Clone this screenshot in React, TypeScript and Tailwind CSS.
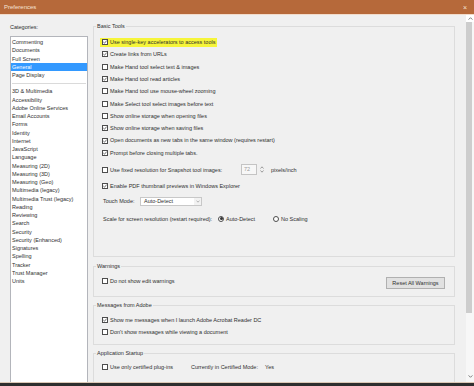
import React from 'react';

const categoriesTop = ['Commenting', 'Documents', 'Full Screen', 'General', 'Page Display'];
const categoriesRest = [
  '3D & Multimedia',
  'Accessibility',
  'Adobe Online Services',
  'Email Accounts',
  'Forms',
  'Identity',
  'Internet',
  'JavaScript',
  'Language',
  'Measuring (2D)',
  'Measuring (3D)',
  'Measuring (Geo)',
  'Multimedia (legacy)',
  'Multimedia Trust (legacy)',
  'Reading',
  'Reviewing',
  'Search',
  'Security',
  'Security (Enhanced)',
  'Signatures',
  'Spelling',
  'Tracker',
  'Trust Manager',
  'Units',
];

const basicTools: { label: string; checked: boolean; highlight?: boolean }[] = [
  { label: 'Use single-key accelerators to access tools', checked: true, highlight: true },
  { label: 'Create links from URLs', checked: true },
  { label: 'Make Hand tool select text & images', checked: false },
  { label: 'Make Hand tool read articles', checked: true },
  { label: 'Make Hand tool use mouse-wheel zooming', checked: false },
  { label: 'Make Select tool select images before text', checked: false },
  { label: 'Show online storage when opening files', checked: false },
  { label: 'Show online storage when saving files', checked: true },
  { label: 'Open documents as new tabs in the same window (requires restart)', checked: true },
  { label: 'Prompt before closing multiple tabs.', checked: true },
];

export default function App() {
  return (
    <div className="w-[474px] h-[386px] flex flex-col bg-[#f0f0f0] text-[#2f2f2f] text-[5.5px] font-['Liberation_Sans',Arial,sans-serif] overflow-hidden">
      {/* title bar */}
      <div className="h-[14px] shrink-0 bg-[#b6693a] flex items-center justify-between pl-[4px] pr-[7px] text-[6px] text-[#f6e3d4]">
        <span>Preferences</span>
        <span className="text-[7px] leading-none">×</span>
      </div>
      <div className="h-[1px] shrink-0 bg-[#f2dccb]" />

      <div className="h-[367px] shrink-0 flex overflow-hidden">
        {/* left: categories */}
        <div className="w-[88px] shrink-0 pl-[10px] pt-[8px] flex flex-col">
          <div className="leading-[8px] h-[8px]">Categories:</div>
          <div className="mt-[5px] w-[78px] h-[360px] shrink-0 border border-[#b3b5bb] bg-white pt-[1px] flex flex-col">
            {categoriesTop.map((c) => (
              <CategoryItem key={c} label={c} selected={c === 'General'} />
            ))}
            <div className="h-[8px] flex items-center px-[1px]">
              <div className="h-[1px] w-full bg-[#dadada]" />
            </div>
            {categoriesRest.map((c) => (
              <CategoryItem key={c} label={c} />
            ))}
          </div>
        </div>

        {/* right: settings */}
        <div className="w-[362px] shrink-0 ml-[5px] pt-[7px] flex flex-col">
          <Group title="Basic Tools" className="h-[235px]">
            <div className="pt-[6px] flex flex-col">
              {basicTools.map((t) => (
                <div key={t.label} className="h-[12.3px] flex items-center pl-[8px]">
                  {t.highlight ? (
                    <span className="flex items-center gap-[2px] bg-[#f6f53a] -ml-[2px] pl-[2px] pr-[2px] h-[9px]">
                      <Check checked={t.checked} />
                      <span>{t.label}</span>
                    </span>
                  ) : (
                    <span className="flex items-center gap-[2px]">
                      <Check checked={t.checked} />
                      <span>{t.label}</span>
                    </span>
                  )}
                </div>
              ))}

              <div className="mt-[3px] h-[16px] flex items-center pl-[8px]">
                <span className="w-[139px] flex items-center gap-[2px]">
                  <Check checked={false} />
                  <span>Use fixed resolution for Snapshot tool images:</span>
                </span>
                <span className="w-[16px] h-[11px] border border-[#c4c4c4] bg-[#f7f7f7] text-[#9a9a9a] pl-[2px] leading-[9px]">72</span>
                <span className="ml-[3px] flex flex-col items-center gap-[1px]">
                  <svg width="4" height="3" viewBox="0 0 4 3">
                    <path d="M0.5 2.5 L2 0.8 L3.5 2.5" stroke="#777" strokeWidth="0.7" fill="none" />
                  </svg>
                  <svg width="4" height="3" viewBox="0 0 4 3">
                    <path d="M0.5 0.5 L2 2.2 L3.5 0.5" stroke="#777" strokeWidth="0.7" fill="none" />
                  </svg>
                </span>
                <span className="ml-[7px]">pixels/inch</span>
              </div>

              <div className="h-[16px] flex items-center pl-[8px]">
                <span className="flex items-center gap-[2px]">
                  <Check checked />
                  <span>Enable PDF thumbnail previews in Windows Explorer</span>
                </span>
              </div>

              <div className="h-[15px] flex items-center pl-[9px]">
                <span className="w-[37px]">Touch Mode:</span>
                <span className="w-[62px] h-[9px] border border-[#c8c8c8] bg-white flex items-center">
                  <span className="flex-1 pl-[3px]">Auto-Detect</span>
                  <span className="w-[7px] h-full bg-[#f2f2f2] flex items-center justify-center">
                    <svg width="4" height="3" viewBox="0 0 4 3">
                      <path d="M0.5 0.6 L2 2.2 L3.5 0.6" stroke="#8a8a8a" strokeWidth="0.6" fill="none" />
                    </svg>
                  </span>
                </span>
              </div>

              <div className="mt-[2px] h-[16px] flex items-center pl-[9px]">
                <span className="w-[115px]">Scale for screen resolution (restart required):</span>
                <span className="w-[55px] flex items-center gap-[2px]">
                  <Radio selected />
                  <span>Auto-Detect</span>
                </span>
                <span className="flex items-center gap-[2px]">
                  <Radio selected={false} />
                  <span>No Scaling</span>
                </span>
              </div>
            </div>
          </Group>

          <Group title="Warnings" className="mt-[5px] h-[35px]">
            <div className="pt-[5px] pl-[8px] pr-[9px] flex items-start justify-between">
              <span className="h-[12px] flex items-center gap-[2px]">
                <Check checked={false} />
                <span>Do not show edit warnings</span>
              </span>
              <button className="mt-[2px] w-[59px] h-[12px] border border-[#b0b0b0] bg-[#e1e1e1] text-[5.5px] text-[#2f2f2f] flex items-center justify-center">
                Reset All Warnings
              </button>
            </div>
          </Group>

          <Group title="Messages from Adobe" className="mt-[4px] h-[44px]">
            <div className="pt-[5px] pl-[8px] flex flex-col">
              <span className="h-[12px] flex items-center gap-[2px]">
                <Check checked />
                <span>Show me messages when I launch Adobe Acrobat Reader DC</span>
              </span>
              <span className="h-[12px] flex items-center gap-[2px]">
                <Check checked={false} />
                <span>Don't show messages while viewing a document</span>
              </span>
            </div>
          </Group>

          <Group title="Application Startup" className="mt-[4px] h-[40px] shrink-0">
            <div className="pt-[4px] pl-[8px] h-[16px] flex items-center">
              <span className="w-[89px] flex items-center gap-[2px]">
                <Check checked={false} />
                <span>Use only certified plug-ins</span>
              </span>
              <span className="w-[74px]">Currently in Certified Mode:</span>
              <span>Yes</span>
            </div>
          </Group>
        </div>

        {/* scrollbar */}
        <div className="ml-[11px] w-[8px] shrink-0 flex flex-col bg-[#f7f7f7]">
          <div className="h-[7px] bg-white flex items-center justify-center">
            <svg width="5" height="3" viewBox="0 0 5 3">
              <path d="M0.6 2.6 L2.5 0.7 L4.4 2.6" stroke="#606060" strokeWidth="0.8" fill="none" />
            </svg>
          </div>
          <div className="w-[6px] h-[291px] bg-[#cdcdcd]" />
          <div className="flex-1" />
          <div className="h-[8px] flex items-start justify-center pt-[1px]">
            <svg width="5" height="3" viewBox="0 0 5 3">
              <path d="M0.6 0.4 L2.5 2.3 L4.4 0.4" stroke="#606060" strokeWidth="0.8" fill="none" />
            </svg>
          </div>
        </div>
      </div>

      <div className="h-[1px] shrink-0 bg-[#dcc8b6]" />
      <div className="h-[3px] shrink-0 bg-[#2e2e2e]" />
    </div>
  );
}

function CategoryItem({ label, selected }: { label: string; selected?: boolean }) {
  return (
    <div
      className={
        selected
          ? 'h-[8.25px] leading-[8.25px] pl-[1px] shrink-0 bg-[#3399ff] text-white'
          : 'h-[8.25px] leading-[8.25px] pl-[1px] shrink-0'
      }
    >
      {label}
    </div>
  );
}

function Group({ title, className, children }: { title: string; className?: string; children: React.ReactNode }) {
  return (
    <fieldset className={`shrink-0 border border-[#dcdcdc] ${className ?? ''}`}>
      <legend className="ml-[2px] px-[1px] leading-[8px] h-[8px]">{title}</legend>
      {children}
    </fieldset>
  );
}

function Check({ checked }: { checked: boolean }) {
  return (
    <span className="w-[6px] h-[6px] shrink-0 border border-[#4d4d4d] bg-white flex items-center justify-center">
      {checked && (
        <svg width="4" height="4" viewBox="0 0 4 4">
          <path d="M0.3 2 L1.5 3.2 L3.7 0.6" stroke="#333" strokeWidth="0.7" fill="none" />
        </svg>
      )}
    </span>
  );
}

function Radio({ selected }: { selected: boolean }) {
  return (
    <span className="w-[6px] h-[6px] shrink-0 rounded-full border border-[#4d4d4d] bg-white flex items-center justify-center">
      {selected && <span className="w-[3px] h-[3px] rounded-full bg-[#333]" />}
    </span>
  );
}
